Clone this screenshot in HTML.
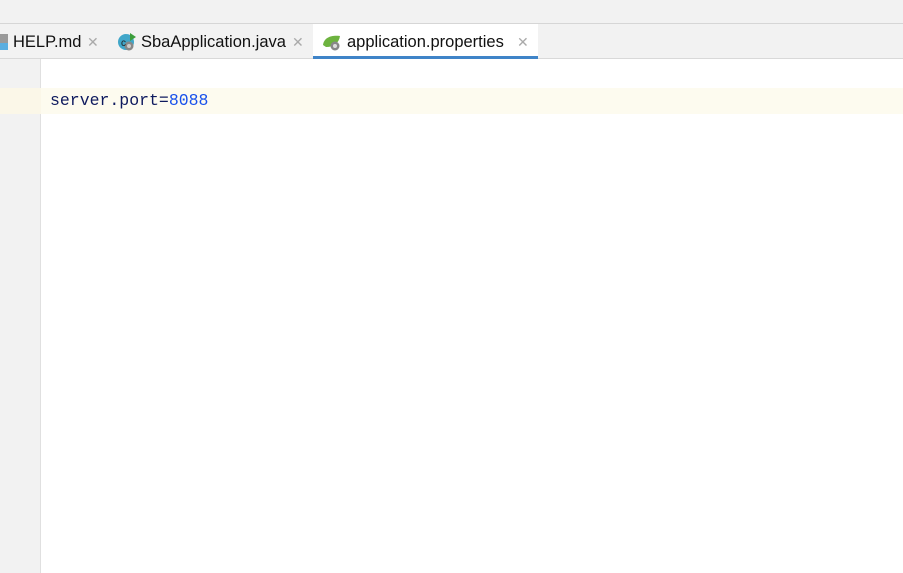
<!DOCTYPE html>
<html><head><meta charset="utf-8"><style>
*{margin:0;padding:0;box-sizing:border-box}
body{width:903px;height:573px;overflow:hidden;background:#fff;font-family:"Liberation Sans",sans-serif;position:relative}
.top{position:absolute;left:0;top:0;width:903px;height:24px;background:#f2f2f2;border-bottom:1px solid #d6d6d6}
.tabs{position:absolute;left:0;top:24px;width:903px;height:35px;background:#f2f2f2;border-bottom:1px solid #d9d9d9}
.t{position:absolute;top:0;font-size:16.5px;color:#111;line-height:37px;white-space:nowrap}
.x{position:absolute;top:0;color:#aaa;font-size:14px;line-height:36px}
.active{position:absolute;top:0;left:313px;width:225px;background:#fff;border-bottom:3px solid #3f84c8;height:35px}
.gutter{position:absolute;left:0;top:59px;width:41px;height:514px;background:#f2f2f2;border-right:1px solid #e0e0e0}
.hl{position:absolute;left:0;top:88px;width:903px;height:26px;background:#fdfbef}
.hlg{position:absolute;left:0;top:88px;width:41px;height:26px;background:#fbf7e8}
.code{position:absolute;left:50px;top:91px;font-family:"Liberation Mono",monospace;font-size:16.5px;color:#0e1a5e;line-height:20px}
.num{color:#1750eb}
</style></head><body>
<div class="top"></div>
<div class="tabs">
  <div class="active"></div>
  <span style="position:absolute;left:-4px;top:10px;width:12px;height:16px;background:linear-gradient(#9a9a9a 55%,#5aaee0 55%)"></span>
  <span class="t" style="left:13px">HELP.md</span><span class="x" style="left:87px">✕</span>
  <svg style="position:absolute;left:117px;top:8px" width="20" height="20" viewBox="0 0 20 20"><circle cx="9" cy="10" r="8" fill="#40a6c9"/><path d="M13 1l6 4-6 4z" fill="#3c9e3c"/><circle cx="12" cy="14" r="4.5" fill="#888"/><circle cx="12" cy="14" r="2" fill="#ccc"/><text x="4" y="14" font-size="10" fill="#222" font-family="Liberation Sans">c</text></svg>
  <span class="t" style="left:141px">SbaApplication.java</span><span class="x" style="left:292px">✕</span>
  <svg style="position:absolute;left:322px;top:8px" width="20" height="20" viewBox="0 0 20 20"><path d="M1 13 C2 5 10 3 18 4 C17 11 12 15 4 15z" fill="#6db33f"/><circle cx="13" cy="14" r="4.5" fill="#888"/><circle cx="13" cy="14" r="2" fill="#ddd"/></svg>
  <span class="t" style="left:347px">application.properties</span><span class="x" style="left:517px">✕</span>
</div>
<div class="gutter"></div>
<div class="hl"></div><div class="hlg"></div>
<div class="code">server.port=<span class="num">8088</span></div>
</body></html>
